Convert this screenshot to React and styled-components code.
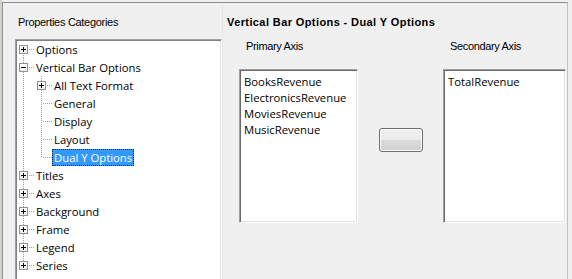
import React from "react";
import styled, { createGlobalStyle } from "styled-components";

const GlobalStyle = createGlobalStyle`
  html, body {
    margin: 0;
    padding: 0;
    background: #f0f0f0;
  }
  body {
    font-family: "Liberation Sans", Arial, sans-serif;
  }
`;

const Screen = styled.div`
  display: flex;
  width: 572px;
  height: 279px;
  overflow: hidden;
  background: #f0f0f0;
`;

const Splitter = styled.div`
  flex: none;
  width: 2px;
  background: #d5d1c9;
`;

const Frame = styled.div`
  display: flex;
  flex: 1;
  height: 300px;
  margin: 2px 4px 0 0;
  border-top: 1px solid #8e8e8e;
  border-left: 1px solid #8e8e8e;
  border-right: 1px solid #c4c4c4;
`;

const LeftColumn = styled.div`
  display: flex;
  flex-direction: column;
  flex: none;
  width: 219px;
`;

const Caption = styled.div`
  box-sizing: border-box;
  height: 36px;
  padding: 13px 0 0 ${(p) => p.$indent}px;
  font-size: 11px;
  line-height: 13px;
  font-weight: ${(p) => (p.$bold ? 700 : 400)};
  letter-spacing: ${(p) => (p.$bold ? "0.4px" : "-0.3px")};
  color: #000;
  white-space: nowrap;
`;

const TreeBox = styled.div`
  flex: 1;
  margin-left: 12px;
  background: #fff;
  border-style: solid;
  border-width: 1px;
  border-color: #a0a0a0 #ffffff #ffffff #a0a0a0;
  box-shadow: inset 1px 1px 0 #828282, inset -1px 0 0 #e3e3e3;
  font-family: "Open Sans", "Noto Sans", sans-serif;
  font-size: 11.3px;
`;

const Row = styled.div`
  display: flex;
  height: 18px;
`;

const dotsDown = "repeating-linear-gradient(to bottom, #a0a0a0 0 1px, transparent 1px 2px)";
const dotsRight = "repeating-linear-gradient(to right, #a0a0a0 0 1px, transparent 1px 2px)";

const Guide = styled.span`
  position: relative;
  flex: none;
  width: 18px;
  height: 18px;

  &::before {
    content: "";
    position: absolute;
    left: 7px;
    width: 1px;
    top: ${(p) => (p.$v === "down" ? "9px" : "0")};
    height: ${(p) => (p.$v === "none" ? "0" : p.$v === "full" ? "18px" : "9px")};
    background: ${dotsDown};
  }

  &::after {
    content: "";
    position: absolute;
    top: 9px;
    left: 9px;
    height: 1px;
    width: ${(p) => (p.$h ? "9px" : "0")};
    background: ${dotsRight};
  }
`;

const Toggle = styled.span`
  position: absolute;
  z-index: 1;
  left: 3px;
  top: 5px;
  box-sizing: border-box;
  width: 9px;
  height: 9px;
  border: 1px solid #919191;
  background: linear-gradient(#ffffff, #ececec);

  &::before {
    content: "";
    position: absolute;
    left: 1px;
    top: 3px;
    width: 5px;
    height: 1px;
    background: #000;
  }

  &::after {
    content: "";
    position: absolute;
    left: 3px;
    top: 1px;
    width: 1px;
    height: ${(p) => (p.$open ? "0" : "5px")};
    background: #000;
  }
`;

const Label = styled.span`
  box-sizing: border-box;
  height: 17px;
  margin-top: 1px;
  padding: 0 2px;
  line-height: 17px;
  white-space: nowrap;
  color: ${(p) => (p.$selected ? "#fff" : "#000")};
  background: ${(p) => (p.$selected ? "#3399ff" : "transparent")};
  outline: ${(p) => (p.$selected ? "1px dotted #202020" : "none")};
  outline-offset: -1px;
`;

const RightColumn = styled.div`
  flex: 1;
  border-left: 1px solid #e6e6e6;
`;

const AxisGrid = styled.div`
  display: grid;
  grid-template-columns: 119px 45px 123px;
  grid-template-rows: 13px 154px;
  column-gap: 20px;
  row-gap: 16px;
  margin: 1px 0 0 16px;
`;

const AxisLabel = styled.div`
  padding-left: 7px;
  font-size: 11px;
  line-height: 13px;
  letter-spacing: -0.35px;
  color: #000;
  white-space: nowrap;
`;

const ListBox = styled.div`
  box-sizing: border-box;
  padding: 4px 4px;
  background: #fff;
  border-style: solid;
  border-width: 1px;
  border-color: #a0a0a0 #ffffff #ffffff #a0a0a0;
  box-shadow: inset 1px 1px 0 #696969, inset -1px -1px 0 #e3e3e3;
  font-family: "Open Sans", "Noto Sans", sans-serif;
  font-size: 11.3px;
  color: #000;
`;

const ListItem = styled.div`
  height: 16px;
  line-height: 16px;
  white-space: nowrap;
`;

const MoveButton = styled.button`
  justify-self: end;
  align-self: start;
  width: 44px;
  height: 24px;
  margin-top: 59px;
  padding: 0;
  border: 1px solid #707070;
  border-radius: 3px;
  background: linear-gradient(to bottom, #f2f2f2 0%, #ebebeb 50%, #dddddd 51%, #cfcfcf 100%);
  box-shadow: inset 0 0 0 1px #fbfbfb;
`;

const tree = [
  { label: "Options", children: [] },
  {
    label: "Vertical Bar Options",
    open: true,
    children: [
      { label: "All Text Format", children: [] },
      { label: "General" },
      { label: "Display" },
      { label: "Layout" },
      { label: "Dual Y Options", selected: true },
    ],
  },
  { label: "Titles", children: [] },
  { label: "Axes", children: [] },
  { label: "Background", children: [] },
  { label: "Frame", children: [] },
  { label: "Legend", children: [] },
  { label: "Series", children: [] },
];

// flatten nodes into rows, with the connector kind for every indent level
function flatten(nodes, trail = [], depth = 0) {
  const rows = [];
  nodes.forEach((node, i) => {
    const last = i === nodes.length - 1;
    const first = i === 0 && depth === 0;
    const own = first ? "down" : last ? "up" : "full";
    rows.push({ ...node, guides: [...trail.map((t) => (t ? "full" : "none")), own] });
    if (node.open && node.children) {
      rows.push(...flatten(node.children, [...trail, !last], depth + 1));
    }
  });
  return rows;
}

const rows = flatten(tree);
const primary = ["BooksRevenue", "ElectronicsRevenue", "MoviesRevenue", "MusicRevenue"];
const secondary = ["TotalRevenue"];

export default function App() {
  return (
    <>
      <GlobalStyle />
      <Screen>
        <Splitter />
        <Frame>
          <LeftColumn>
            <Caption $indent={15}>Properties Categories</Caption>
            <TreeBox>
              {rows.map((row) => (
                <Row key={row.label}>
                  {row.guides.map((g, level) => {
                    const mine = level === row.guides.length - 1;
                    return (
                      <Guide key={level} $v={g} $h={mine}>
                        {mine && row.children && <Toggle $open={row.open} />}
                      </Guide>
                    );
                  })}
                  <Label $selected={row.selected}>{row.label}</Label>
                </Row>
              ))}
            </TreeBox>
          </LeftColumn>
          <RightColumn>
            <Caption $indent={4} $bold>
              Vertical Bar Options - Dual Y Options
            </Caption>
            <AxisGrid>
              <AxisLabel>Primary Axis</AxisLabel>
              <span />
              <AxisLabel>Secondary Axis</AxisLabel>
              <ListBox>
                {primary.map((item) => (
                  <ListItem key={item}>{item}</ListItem>
                ))}
              </ListBox>
              <MoveButton type="button" />
              <ListBox>
                {secondary.map((item) => (
                  <ListItem key={item}>{item}</ListItem>
                ))}
              </ListBox>
            </AxisGrid>
          </RightColumn>
        </Frame>
      </Screen>
    </>
  );
}
